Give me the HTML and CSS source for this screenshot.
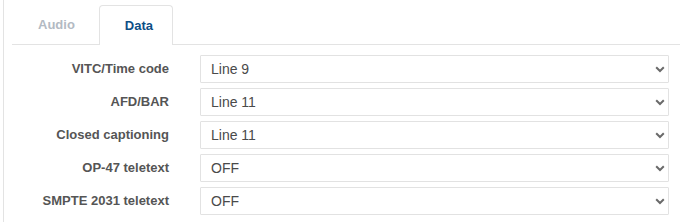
FILE: index.html
```html
<!DOCTYPE html>
<html>
<head>
<meta charset="utf-8">
<link rel="stylesheet" href="styles.css">
</head>
<body>
<div class="panel">
  <div class="tabs">
    <div class="tab">Audio</div>
    <div class="tab active">Data</div>
  </div>
  <div class="form">
    <label class="lbl">VITC/Time code</label>
    <div class="sel"><select><option>Line 9</option></select><svg class="chev" width="10" height="7" viewBox="0 0 10 7"><path d="M1.2 1.3 L5 5 L8.8 1.3" fill="none" stroke="#6a6a6a" stroke-width="2"/></svg></div>
    <label class="lbl">AFD/BAR</label>
    <div class="sel"><select><option>Line 11</option></select><svg class="chev" width="10" height="7" viewBox="0 0 10 7"><path d="M1.2 1.3 L5 5 L8.8 1.3" fill="none" stroke="#6a6a6a" stroke-width="2"/></svg></div>
    <label class="lbl">Closed captioning</label>
    <div class="sel"><select><option>Line 11</option></select><svg class="chev" width="10" height="7" viewBox="0 0 10 7"><path d="M1.2 1.3 L5 5 L8.8 1.3" fill="none" stroke="#6a6a6a" stroke-width="2"/></svg></div>
    <label class="lbl">OP-47 teletext</label>
    <div class="sel"><select><option>OFF</option></select><svg class="chev" width="10" height="7" viewBox="0 0 10 7"><path d="M1.2 1.3 L5 5 L8.8 1.3" fill="none" stroke="#6a6a6a" stroke-width="2"/></svg></div>
    <label class="lbl">SMPTE 2031 teletext</label>
    <div class="sel"><select><option>OFF</option></select><svg class="chev" width="10" height="7" viewBox="0 0 10 7"><path d="M1.2 1.3 L5 5 L8.8 1.3" fill="none" stroke="#6a6a6a" stroke-width="2"/></svg></div>
  </div>
</div>
</body>
</html>
```
FILE: styles.css
```css
html, body {
  margin: 0;
  padding: 0;
  background: #fff;
  font-family: "Liberation Sans", Arial, sans-serif;
}
.panel {
  margin-left: 3px;
  border-left: 1px solid #e3e3e3;
  height: 222px;
  box-sizing: border-box;
}
.tabs {
  display: flex;
  margin-left: 8px;
  padding-top: 5px;
  border-bottom: 1px solid #e3e3e3;
  height: 39px;
}
.tab {
  padding: 0 23px 0 25px;
  font-size: 13px;
  font-weight: bold;
  color: #b3bac3;
  line-height: 38px;
  border: 1px solid transparent;
  border-bottom: none;
  border-radius: 4px 4px 0 0;
}
.tab.active {
  padding: 0 19px 0 25px;
  color: #0d4f86;
  background: #fff;
  border-color: #e3e3e3;
  margin-bottom: -1px;
  line-height: 39px;
}
.form {
  display: grid;
  grid-template-columns: 165px 469px;
  column-gap: 31px;
  row-gap: 5px;
  margin-top: 10px;
}
.lbl {
  text-align: right;
  font-size: 13px;
  font-weight: bold;
  color: #555;
  line-height: 28px;
}
.sel {
  position: relative;
  height: 28px;
}
.sel select {
  appearance: none;
  -webkit-appearance: none;
  width: 100%;
  height: 28px;
  box-sizing: border-box;
  border: 1px solid #e2e2e2;
  border-radius: 1px;
  background: #fff;
  padding: 0 0 0 10px;
  font-family: "Liberation Sans", Arial, sans-serif;
  font-size: 14px;
  color: #4a4a4a;
  outline: none;
}
.chev {
  position: absolute;
  right: 4px;
  top: 11px;
  pointer-events: none;
}
```
